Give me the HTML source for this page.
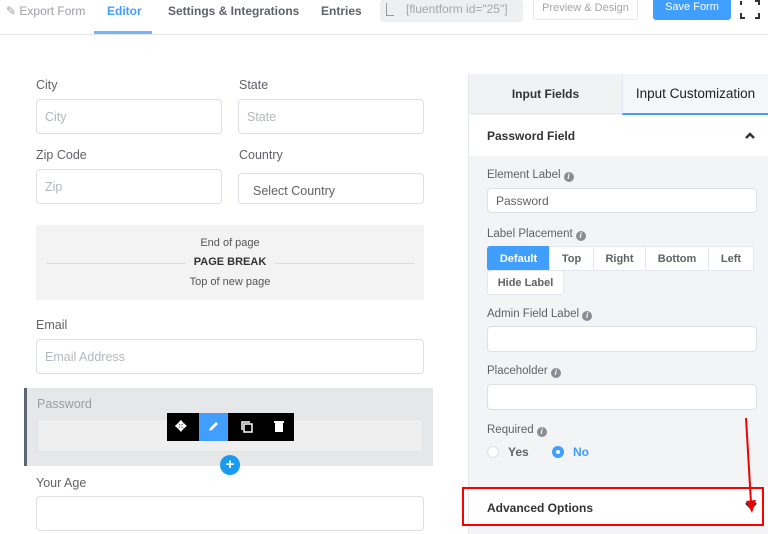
<!DOCTYPE html>
<html><head><meta charset="utf-8"><style>
*{box-sizing:border-box;margin:0;padding:0}
body{width:768px;height:534px;overflow:hidden;background:#fff;font-family:"Liberation Sans",sans-serif;color:#606266;position:relative;font-size:13px}
.a{position:absolute}
.lbl{position:absolute;font-size:12.5px;color:#606266}
.inp{position:absolute;border:1px solid #dcdfe6;border-radius:4px;background:#fff;font-size:12.5px;color:#b4b7bd;padding-left:8px;display:flex;align-items:center}
.rl{position:absolute;font-size:11.5px;color:#606266}
.i{display:inline-block;width:10px;height:10px;border-radius:50%;background:#8a8d93;color:#fff;font-size:8px;text-align:center;line-height:10px;font-style:italic;font-weight:bold;vertical-align:-1px;margin-left:3px}
.btn{position:absolute;top:246px;height:25px;border:1px solid #e4e7ed;background:#fff;font-size:11px;color:#606266;font-weight:bold;display:flex;align-items:center;justify-content:center}
</style></head><body>
<div class="a" style="left:0;top:34px;width:768px;height:1px;background:#e4e7ed"></div>
<div class="a" style="left:6px;top:4px;font-size:12px;color:#9a9da3">✎ Export Form</div>
<div class="a" style="left:107px;top:4px;font-size:12px;color:#409eff;font-weight:bold">Editor</div>
<div class="a" style="left:94px;top:31px;width:58px;height:3px;background:#74b4f7"></div>
<div class="a" style="left:168px;top:4px;font-size:12px;color:#5f6268;font-weight:bold">Settings &amp; Integrations</div>
<div class="a" style="left:321px;top:4px;font-size:12px;color:#5f6268;font-weight:bold">Entries</div>
<div class="a" style="left:380px;top:0;width:143px;height:22px;background:#eeeff1;border-radius:3px;font-size:12px;color:#a3a6ab;padding:2px 0 0 26px">[fluentform id="25"]</div>
<div class="a" style="left:386px;top:3px;width:8px;height:13px;border-left:1px solid #999;border-bottom:1px solid #999"></div>
<div class="a" style="left:533px;top:-3px;width:105px;height:23px;border:1px solid #e4e7ed;border-radius:3px;font-size:11px;color:#a3a6ab;text-align:center;padding-top:4px">Preview &amp; Design</div>
<div class="a" style="left:653px;top:-3px;width:78px;height:23px;background:#409eff;border-radius:3px;font-size:11px;color:#fff;text-align:center;padding-top:4px">Save Form</div>
<svg class="a" style="left:740px;top:0" width="20" height="20" fill="none" stroke="#333" stroke-width="2"><path d="M1 5V1M15 1h4v4M1 13v5h4M19 13v5h-4"/></svg>

<div class="lbl" style="left:36px;top:78px">City</div>
<div class="inp" style="left:36px;top:99px;width:186px;height:35px">City</div>
<div class="lbl" style="left:239px;top:78px">State</div>
<div class="inp" style="left:238px;top:99px;width:186px;height:35px">State</div>
<div class="lbl" style="left:36px;top:148px">Zip Code</div>
<div class="inp" style="left:36px;top:169px;width:186px;height:35px">Zip</div>
<div class="lbl" style="left:239px;top:148px">Country</div>
<div class="inp" style="left:238px;top:173px;width:186px;height:31px;color:#606266;padding-left:14px;padding-top:4px">Select Country</div>
<div class="a" style="left:36px;top:225px;width:388px;height:75px;background:#f3f3f3;text-align:center;font-size:11px;color:#555">
<div style="position:absolute;top:12px;width:100%">End of page</div>
<div style="position:absolute;left:10px;right:10px;top:38px;height:1px;background:#ddd"></div>
<div style="position:absolute;top:31px;left:50%;transform:translateX(-50%);background:#f3f3f3;padding:0 8px;font-weight:bold;color:#333">PAGE BREAK</div>
<div style="position:absolute;top:51px;width:100%">Top of new page</div></div>
<div class="lbl" style="left:36px;top:318px">Email</div>
<div class="inp" style="left:36px;top:339px;width:388px;height:35px">Email Address</div>
<div class="a" style="left:24px;top:388px;width:409px;height:78px;background:#e6e7e9;border-left:3px solid #5d6670"></div>
<div class="lbl" style="left:37px;top:397px;color:#9a9da3">Password</div>
<div class="a" style="left:37px;top:419px;width:386px;height:33px;background:#efefef;border:1px solid #e3e3e3;border-radius:4px"></div>
<div class="a" style="left:167px;top:413px;width:127px;height:28px;background:#000"></div>
<div class="a" style="left:199px;top:413px;width:29px;height:28px;background:#409eff"></div>
<div class="a" style="left:175px;top:418px;color:#fff;font-size:14px;font-weight:bold">✥</div>
<svg class="a" style="left:207px;top:420px" width="13" height="13"><path d="M2 11l1-3 6-6 2 2-6 6z" fill="#fff"/></svg>
<svg class="a" style="left:240px;top:420px" width="14" height="14" fill="none" stroke="#fff" stroke-width="1.5"><rect x="4" y="4" width="8" height="8"/><path d="M2 10V2h8"/></svg>
<svg class="a" style="left:274px;top:420px" width="10" height="12" fill="#fff"><rect x="0" y="1" width="10" height="2"/><rect x="1" y="3" width="8" height="9"/></svg>
<div class="a" style="left:220px;top:455px;width:20px;height:20px;border-radius:50%;background:#1a9bef;color:#fff;text-align:center;font-weight:bold;font-size:15px;line-height:20px">+</div>
<div class="lbl" style="left:36px;top:476px">Your Age</div>
<div class="inp" style="left:36px;top:496px;width:388px;height:35px"></div>

<div class="a" style="left:468px;top:74px;width:300px;height:460px;background:#f3f4f5;border-left:1px solid #e4e7ed"></div>
<div class="a" style="left:469px;top:74px;width:153px;height:40px;background:#f1f2f4;border-bottom:1px solid #e4e7ed;font-size:12px;font-weight:bold;color:#333;text-align:center;line-height:40px">Input Fields</div>
<div class="a" style="left:622px;top:74px;width:146px;height:41px;background:#f5f6f7;border-left:1px solid #e4e7ed;border-bottom:2px solid #409eff;font-size:13.5px;color:#222;text-align:center;line-height:40px">Input Customization</div>
<div class="a" style="left:469px;top:115px;width:299px;height:41px;background:#fff;font-size:12px;font-weight:bold;color:#333;padding:14px 0 0 18px">Password Field</div>
<svg class="a" style="left:744px;top:131px" width="12" height="9" fill="none" stroke="#333" stroke-width="2.5"><path d="M2 7l4-4 4 4"/></svg>
<div class="rl" style="left:487px;top:169px">Element Label<span class="i">i</span></div>
<div class="inp" style="left:487px;top:188px;width:270px;height:25px;color:#606266;font-size:12px">Password</div>
<div class="rl" style="left:487px;top:228px">Label Placement<span class="i">i</span></div>
<div class="btn" style="left:487px;width:63px;background:#409eff;color:#fff;border-color:#409eff;border-radius:3px 0 0 3px">Default</div>
<div class="btn" style="left:549px;width:45px">Top</div>
<div class="btn" style="left:593px;width:53px">Right</div>
<div class="btn" style="left:645px;width:64px">Bottom</div>
<div class="btn" style="left:708px;width:46px">Left</div>
<div class="btn" style="left:487px;top:270px;width:77px;border-radius:3px">Hide Label</div>
<div class="rl" style="left:487px;top:308px">Admin Field Label<span class="i">i</span></div>
<div class="inp" style="left:487px;top:326px;width:270px;height:26px"></div>
<div class="rl" style="left:487px;top:365px">Placeholder<span class="i">i</span></div>
<div class="inp" style="left:487px;top:384px;width:270px;height:26px"></div>
<div class="rl" style="left:487px;top:424px">Required<span class="i">i</span></div>
<div class="a" style="left:487px;top:446px;width:12px;height:12px;border-radius:50%;background:#fff;border:1px solid #dcdfe6"></div>
<div class="rl" style="left:508px;top:445px;font-size:12px;font-weight:bold">Yes</div>
<div class="a" style="left:552px;top:446px;width:12px;height:12px;border-radius:50%;background:#409eff"><div style="margin:4px;width:4px;height:4px;border-radius:50%;background:#fff"></div></div>
<div class="rl" style="left:573px;top:445px;font-size:12px;font-weight:bold;color:#409eff">No</div>
<div class="a" style="left:469px;top:487px;width:299px;height:39px;background:#fff"></div>
<div class="a" style="left:462px;top:487px;width:302px;height:39px;border:2px solid #f00"></div>
<div class="a" style="left:487px;top:501px;font-size:12px;font-weight:bold;color:#333">Advanced Options</div>
<svg class="a" style="left:744px;top:500px" width="14" height="12" fill="none" stroke="#333" stroke-width="2.5"><path d="M2 3l5 5 5-5"/></svg>
<svg class="a" style="left:735px;top:415px" width="25" height="100"><path d="M11 3L16 88" stroke="#e00" stroke-width="2"/><path d="M11 86l6 12 4-13z" fill="#e00"/></svg>
</body></html>
